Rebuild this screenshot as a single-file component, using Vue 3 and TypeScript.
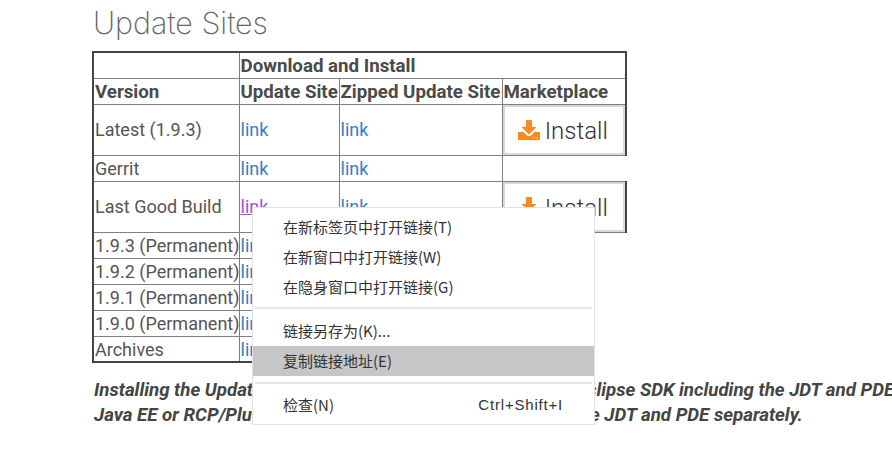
<script setup lang="ts">
interface Row { name: string; h: string; zip: boolean; install: boolean; visited?: boolean }
const rows: Row[] = [
  { name: 'Latest (1.9.3)', h: 'tall', zip: true, install: true },
  { name: 'Gerrit', h: 'short', zip: true, install: false },
  { name: 'Last Good Build', h: 'tall', zip: true, install: true, visited: true },
  { name: '1.9.3 (Permanent)', h: 'short', zip: false, install: false },
  { name: '1.9.2 (Permanent)', h: 'short', zip: false, install: false },
  { name: '1.9.1 (Permanent)', h: 'short', zip: false, install: false },
  { name: '1.9.0 (Permanent)', h: 'short', zip: false, install: false },
  { name: 'Archives', h: 'short last', zip: false, install: false },
]
const menuGroups: { label: string; active?: boolean; shortcut?: string }[][] = [
  [
    { label: '在新标签页中打开链接(T)' },
    { label: '在新窗口中打开链接(W)' },
    { label: '在隐身窗口中打开链接(G)' },
  ],
  [
    { label: '链接另存为(K)...' },
    { label: '复制链接地址(E)', active: true },
  ],
  [
    { label: '检查(N)', shortcut: 'Ctrl+Shift+I' },
  ],
]
</script>

<template>
  <div class="page">
    <h2 class="title">Update Sites</h2>
    <table class="sites">
      <colgroup>
        <col class="c1" /><col class="c2" /><col class="c3" /><col class="c4" />
      </colgroup>
      <tbody>
        <tr class="short first">
          <th></th>
          <th colspan="3" class="end">Download and Install</th>
        </tr>
        <tr class="short">
          <th>Version</th>
          <th>Update Site</th>
          <th>Zipped Update Site</th>
          <th class="end">Marketplace</th>
        </tr>
        <tr v-for="r in rows" :key="r.name" :class="r.h">
          <td>{{ r.name }}</td>
          <td><a :class="{ visited: r.visited }">link</a></td>
          <td v-if="r.zip"><a>link</a></td>
          <td v-if="r.install" class="inst end">
            <span class="btn">
              <svg class="dl" viewBox="0 0 22 20" width="22" height="20">
                <path fill="#f98a1f" d="M8 0h6v7h4.5L11 14.5 3.5 7H8z" />
                <path fill="#f98a1f" d="M0 12h5.5l3.5 3.5c1.2 1.1 2.8 1.1 4 0l3.5-3.5H22v8H0z" />
                <circle cx="16" cy="17.6" r=".7" fill="#fff" />
                <circle cx="19" cy="17.6" r=".7" fill="#fff" />
              </svg>
              <span class="btn-label">Install</span>
            </span>
          </td>
        </tr>
      </tbody>
    </table>
    <p class="note">
      <span>Installing the Update Site requires a default package of the Eclipse SDK including the JDT and PDE</span>
      <span>Java EE or RCP/Plug-in packages, otherwise please install the JDT and PDE separately.</span>
    </p>
    <div class="menu">
      <div v-for="(g, i) in menuGroups" :key="i" class="group">
        <div v-for="m in g" :key="m.label" class="item" :class="{ active: m.active }">
          <span>{{ m.label }}</span>
          <span v-if="m.shortcut" class="shortcut">{{ m.shortcut }}</span>
        </div>
      </div>
    </div>
  </div>
</template>

<style>
html, body { margin: 0; background: #fff; overflow: hidden; }
</style>

<style scoped>
.page {
  position: relative;
  width: 892px;
  height: 451px;
  overflow: hidden;
  padding-left: 92px;
  box-sizing: border-box;
  font-family: "Roboto", Arial, sans-serif;
  color: #555;
  font-size: 18px;
}
.title {
  margin: 0 0 0 1px;
  height: 51px;
  line-height: 46px;
  font-family: "Inter", sans-serif;
  font-weight: 200;
  font-size: 30.4px;
  color: #666;
}
.sites {
  table-layout: fixed;
  width: 533px;
  border-collapse: collapse;
}
.c1 { width: 146px; }
.c2 { width: 100px; }
.c3 { width: 163px; }
.c4 { width: 124px; }
th, td {
  border: 1px solid #808080;
  padding: 1px 0 0 1px;
  text-align: left;
  white-space: nowrap;
  overflow: visible;
}
th { color: #4a4a4a; }
tr.tall td { padding: 0 0 1px 1px; }
tr.tall td.inst { padding: 0; }
th:first-child, td:first-child { border-left: 2px solid #444; }
tr.first th { border-top: 2px solid #444; }
.end { border-right: 2px solid #444 !important; }
tr.last td { border-bottom: 2px solid #444; padding-top: 2px; }
th { font-weight: 700; font-size: 18.7px; }
tr.short { height: 26px; }
tr.tall { height: 51px; }
a { color: #2f82c6; }
a.visited { color: #a24fd8; text-decoration: underline; }
.btn {
  display: flex;
  align-items: center;
  justify-content: center;
  gap: 5px;
  box-sizing: border-box;
  height: 50px;
  padding-right: 2px;
  border: 2px solid #d8d8d8;
  font-size: 24px;
  font-weight: 300;
  color: #333;
  background: #fff;
}
.btn-label { padding-top: 2px; }
.note {
  margin: 15px 0 0 2px;
  font-weight: 700;
  font-style: italic;
  font-size: 18.7px;
  line-height: 25px;
  white-space: nowrap;
  color: #444;
}
.note span { display: block; }
.menu {
  position: absolute;
  left: 252px;
  top: 207px;
  width: 343px;
  height: 218px;
  box-sizing: border-box;
  padding-top: 3px;
  background: #fff;
  border: 1px solid #e2e2e2;
  font-family: "Noto Sans CJK SC", "Liberation Sans", sans-serif;
  font-size: 15px;
  color: #333;
}
.group + .group {
  margin: 6px 2px 0;
  padding-top: 7px;
  border-top: 2px solid #e6e6e6;
}
.group:last-child { padding-top: 6px; }
.group + .group .item { margin-left: -2px; margin-right: -2px; padding-bottom: 2px; box-sizing: border-box; }
.item {
  height: 30px;
  display: flex;
  align-items: center;
  justify-content: space-between;
  padding: 0 31px 0 30px;
}
.item.active { background: #c6c6c6; }
.shortcut { font-family: "Liberation Sans", sans-serif; font-size: 15px; letter-spacing: .8px; }
</style>
